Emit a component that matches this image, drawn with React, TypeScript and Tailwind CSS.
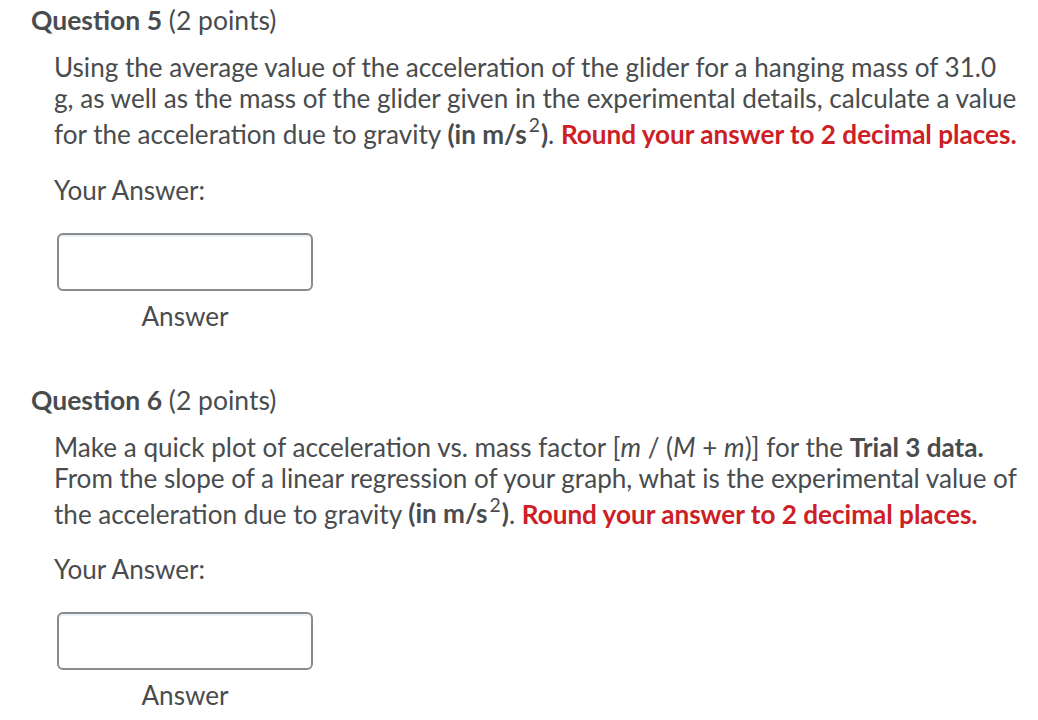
import React from "react"

function Sup() {
  return (
    <sup className="static inline-block align-[0.6em] text-[0.74em] leading-none font-normal pt-[1px] pl-[2px] pr-[1px]">
      2
    </sup>
  )
}

function AnswerBox() {
  return (
    <div className="mt-[28px] w-[256px] flex flex-col items-center">
      <input
        type="text"
        aria-label="Answer"
        className="w-[256px] h-[58px] rounded-[6px] border-2 border-[#868c8f] bg-white shadow-[inset_0_2px_0_0_#eef1f4] outline-none"
      />
      <div className="mt-[10px] leading-[30px]">Answer</div>
    </div>
  )
}

function Question({
  num,
  children,
}: {
  num: number
  children: React.ReactNode
}) {
  return (
    <section className="pl-[31px]">
      <h2 className="leading-[30px] text-[26.5px]">
        <span className="font-bold">Question {num}</span> (2 points)
      </h2>
      <div className="pl-[23px] mt-[17px]">
        <p className="leading-[31px] w-[980px]">{children}</p>
        <p className="mt-[25px] leading-[30px]">Your Answer:</p>
        <div className="pl-[3px]">
          <AnswerBox />
        </div>
      </div>
    </section>
  )
}

export default function App() {
  return (
    <div
      className="w-[1038px] h-[720px] overflow-hidden bg-white text-[#494c4e] text-[26.1px] pt-[5px]"
      style={{ fontFamily: "Lato, 'Open Sans', sans-serif" }}
    >
      <Question num={5}>
        Using the average value of the acceleration of the glider for a
        hanging mass of 31.0
        <br />
        g, as well as the mass of the glider given in the experimental
        details, calculate a value
        <br />
        for the acceleration due to gravity{" "}
        <span className="font-bold">(in m/s<Sup />)</span>.{" "}
        <span className="font-bold text-[#cd2026]">
          Round your answer to 2 decimal places.
        </span>
      </Question>
      <div className="h-[54px]" />
      <Question num={6}>
        Make a quick plot of acceleration vs. mass factor [<i>m</i> / (
        <i>M</i> + <i>m</i>)] for the{" "}
        <span className="font-bold">Trial 3 data.</span>
        <br />
        From the slope of a linear regression of your graph, what is the
        experimental value of
        <br />
        the acceleration due to gravity{" "}
        <span className="font-bold">(in m/s<Sup />)</span>.{" "}
        <span className="font-bold text-[#cd2026]">
          Round your answer to 2 decimal places.
        </span>
      </Question>
    </div>
  )
}
